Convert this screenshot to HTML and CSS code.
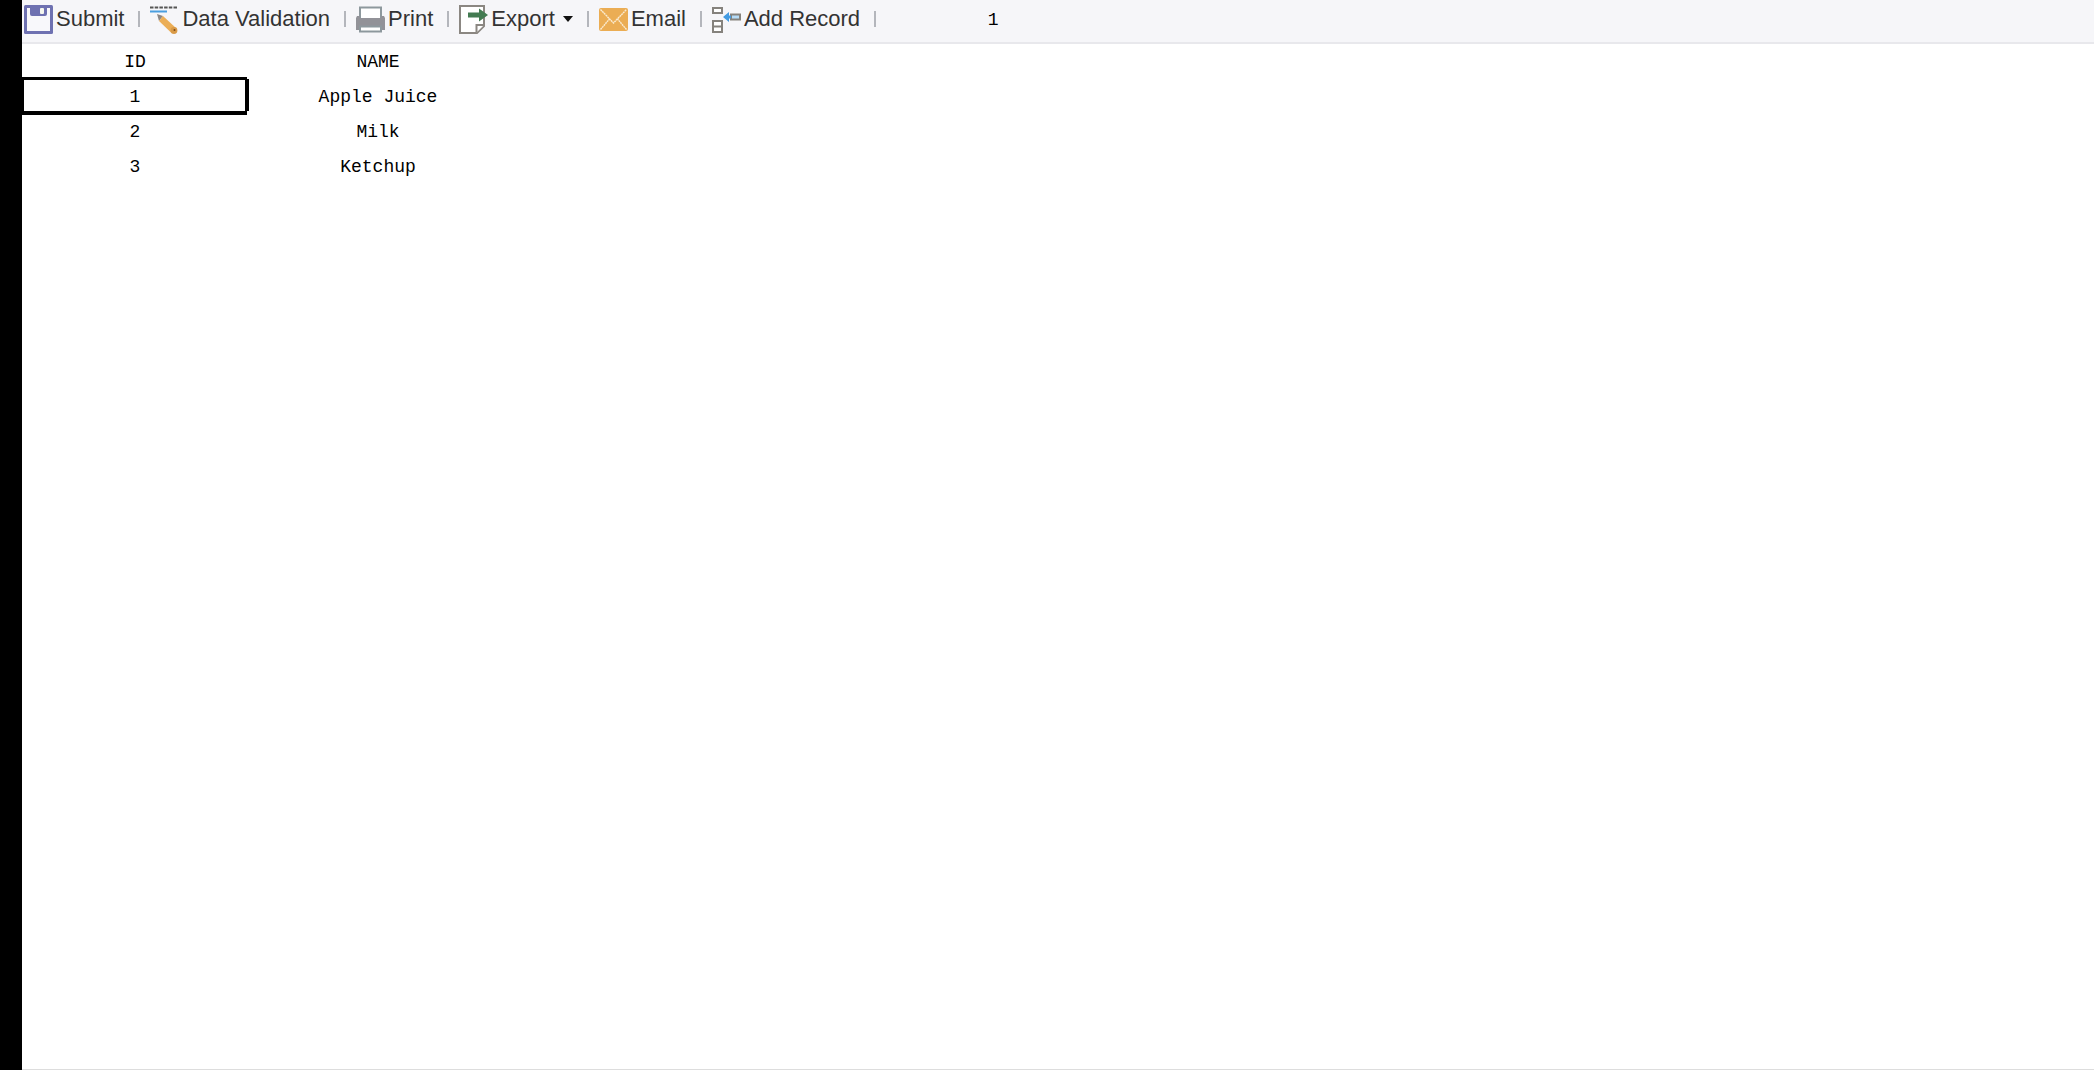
FILE: index.html
```html
<!DOCTYPE html>
<html lang="en">
<head>
    <meta charset="UTF-8">
    <meta name="viewport" content="width=device-width, initial-scale=1.0">
    <title>Data Entry</title>
    <link rel="stylesheet" href="styles.css">
</head>
<body>
<div class="toolbar">
    <button type="button" class="tool">
        <svg class="icon" viewBox="0 0 29 29">
            <path d="M0 1.5Q0 0 1.5 0h26Q29 0 29 1.5v26Q29 29 27.500 29h-26Q0 29 0 27.500z" fill="#6e71b1"/>
            <path d="M3 3h3v6q0 2 2 2h13q2 0 2-2V3h3v23H3z" fill="#f8f8fb"/>
            <rect x="16" y="3" width="4" height="6" rx="1" fill="#f4f6ee"/>
        </svg>
        <span>Submit</span>
    </button>
    <span class="separator"></span>
    <button type="button" class="tool">
        <svg class="icon" viewBox="0 0 29 29">
            <path d="M0 2.500h27" stroke="#555" stroke-width="2" stroke-dasharray="3.500 1.200"/>
            <path d="M0 6.500h17" stroke="#4a9fe0" stroke-width="2"/>
            <path d="M7 9l6 2-4 5z" fill="#8b8785"/>
            <path d="M13 11l13.500 12.500-4.500 5L9 16z" fill="#ebae57"/>
            <circle cx="24" cy="25.500" r="3.400" fill="#d99a48"/>
            <circle cx="24.500" cy="25" r="1" fill="#7c4a17"/>
        </svg>
        <span>Data Validation</span>
    </button>
    <span class="separator"></span>
    <button type="button" class="tool">
        <svg class="icon" viewBox="0 0 29 29">
            <rect x="4" y="2.500" width="21" height="14" fill="#fff" stroke="#8d989d" stroke-width="2"/>
            <path d="M1 11h3v2h21v-2h3l1 2v12H0V13z" fill="#929298"/>
            <rect x="4" y="21.500" width="21" height="5" fill="#fff" stroke="#8d989d" stroke-width="2"/>
        </svg>
        <span>Print</span>
    </button>
    <span class="separator"></span>
    <button type="button" class="tool">
        <svg class="icon" viewBox="0 0 29 29">
            <path d="M1 1h24v20l-7 7H1z" fill="#fff" stroke="#8b8782" stroke-width="2"/>
            <path d="M17.500 27.500V20H25" fill="#fff" stroke="#8b8782" stroke-width="2"/>
            <path d="M9 7.500h11V3.500l9 6.500-9 6.500v-4H9z" fill="#437b52"/>
        </svg>
        <span>Export</span>
        <svg class="caret" viewBox="0 0 10 6"><path d="M0 0h10L5 6z"/></svg>
    </button>
    <span class="separator"></span>
    <button type="button" class="tool">
        <svg class="icon" viewBox="0 0 29 29">
            <rect x="0" y="3" width="29" height="23" rx="2" fill="#ebad54"/>
            <path d="M1.500 4.500L14.500 18 27.500 4.500M1.500 24.500L10.500 14M27.500 24.500L18.500 14" fill="none" stroke="#faebd0" stroke-width="1.400" stroke-dasharray="2 .5"/>
        </svg>
        <span>Email</span>
    </button>
    <span class="separator"></span>
    <button type="button" class="tool">
        <svg class="icon" viewBox="0 0 29 29">
            <g fill="#fff" stroke="#85827d" stroke-width="2">
                <rect x="1" y="3" width="9" height="5"/>
                <rect x="1" y="16" width="9" height="11"/>
                <path d="M1 21.500h9"/>
                <rect x="19" y="9.500" width="9" height="5" fill="#b5dbf7"/>
            </g>
            <path d="M11 12l6-5v3.500h2v3h-2V17z" fill="#439be2"/>
        </svg>
        <span>Add Record</span>
    </button>
    <span class="separator"></span>
    <input type="text" class="cell-value" value="1" aria-label="Cell value">
</div>
<main class="sheet">
    <table class="records">
        <thead>
            <tr>
                <th class="col-id">ID</th>
                <th class="col-name">NAME</th>
            </tr>
        </thead>
        <tbody>
            <tr>
                <td class="selected">1</td>
                <td>Apple Juice</td>
            </tr>
            <tr>
                <td>2</td>
                <td>Milk</td>
            </tr>
            <tr>
                <td>3</td>
                <td>Ketchup</td>
            </tr>
        </tbody>
    </table>
</main>
</body>
</html>
```

FILE: styles.css
```css
* {
    box-sizing: border-box;
    margin: 0;
    padding: 0;
}

body {
    display: flex;
    flex-direction: column;
    min-height: 100vh;
    border-left: 22px solid #000;
    background: #fff;
    font-family: "Liberation Sans", Arial, sans-serif;
    color: #333;
}

.toolbar {
    display: flex;
    align-items: center;
    height: 44px;
    padding: 0 2px 4px;
    background: #f6f6f9;
    border-bottom: 2px solid #e8e8ec;
}

.tool {
    display: flex;
    align-items: center;
    gap: 3px;
    border: none;
    background: none;
    font-family: inherit;
    font-size: 22px;
    line-height: 24px;
    color: #333;
    white-space: nowrap;
    cursor: pointer;
}

.icon {
    width: 29px;
    height: 29px;
}

.caret {
    width: 10px;
    height: 6px;
    margin-left: 5px;
    fill: #111;
}

.separator {
    width: 2px;
    height: 16px;
    margin: 0 10px 0 14px;
    background: #b4b6bc;
}

.cell-value {
    width: 214px;
    padding-top: 2px;
    border: none;
    background: none;
    font-family: "Liberation Mono", monospace;
    font-size: 18px;
    text-align: center;
    color: #000;
}

.sheet {
    flex: 1;
    border-bottom: 1px solid #ddd;
}

.records {
    border-collapse: collapse;
    table-layout: fixed;
    width: 486px;
    font-family: "Liberation Mono", monospace;
    font-size: 18px;
    color: #000;
}

.records th,
.records td {
    height: 34px;
    padding-top: 2px;
    font-weight: normal;
    text-align: center;
    vertical-align: middle;
}

.records td {
    height: 35px;
}

.col-id {
    width: 226px;
}

.col-name {
    width: 260px;
}

.selected {
    position: relative;
}

/* cursor frame, corners cut on the right side */
.selected::after {
    content: "";
    position: absolute;
    inset: -1px -1px -2px 0;
    border: solid #000;
    border-width: 3px 4px 4px 2px;
    clip-path: polygon(0 0, calc(100% - 2px) 0, calc(100% - 2px) 2px, 100% 2px, 100% calc(100% - 4px), calc(100% - 2px) calc(100% - 4px), calc(100% - 2px) 100%, 0 100%);
}
```
